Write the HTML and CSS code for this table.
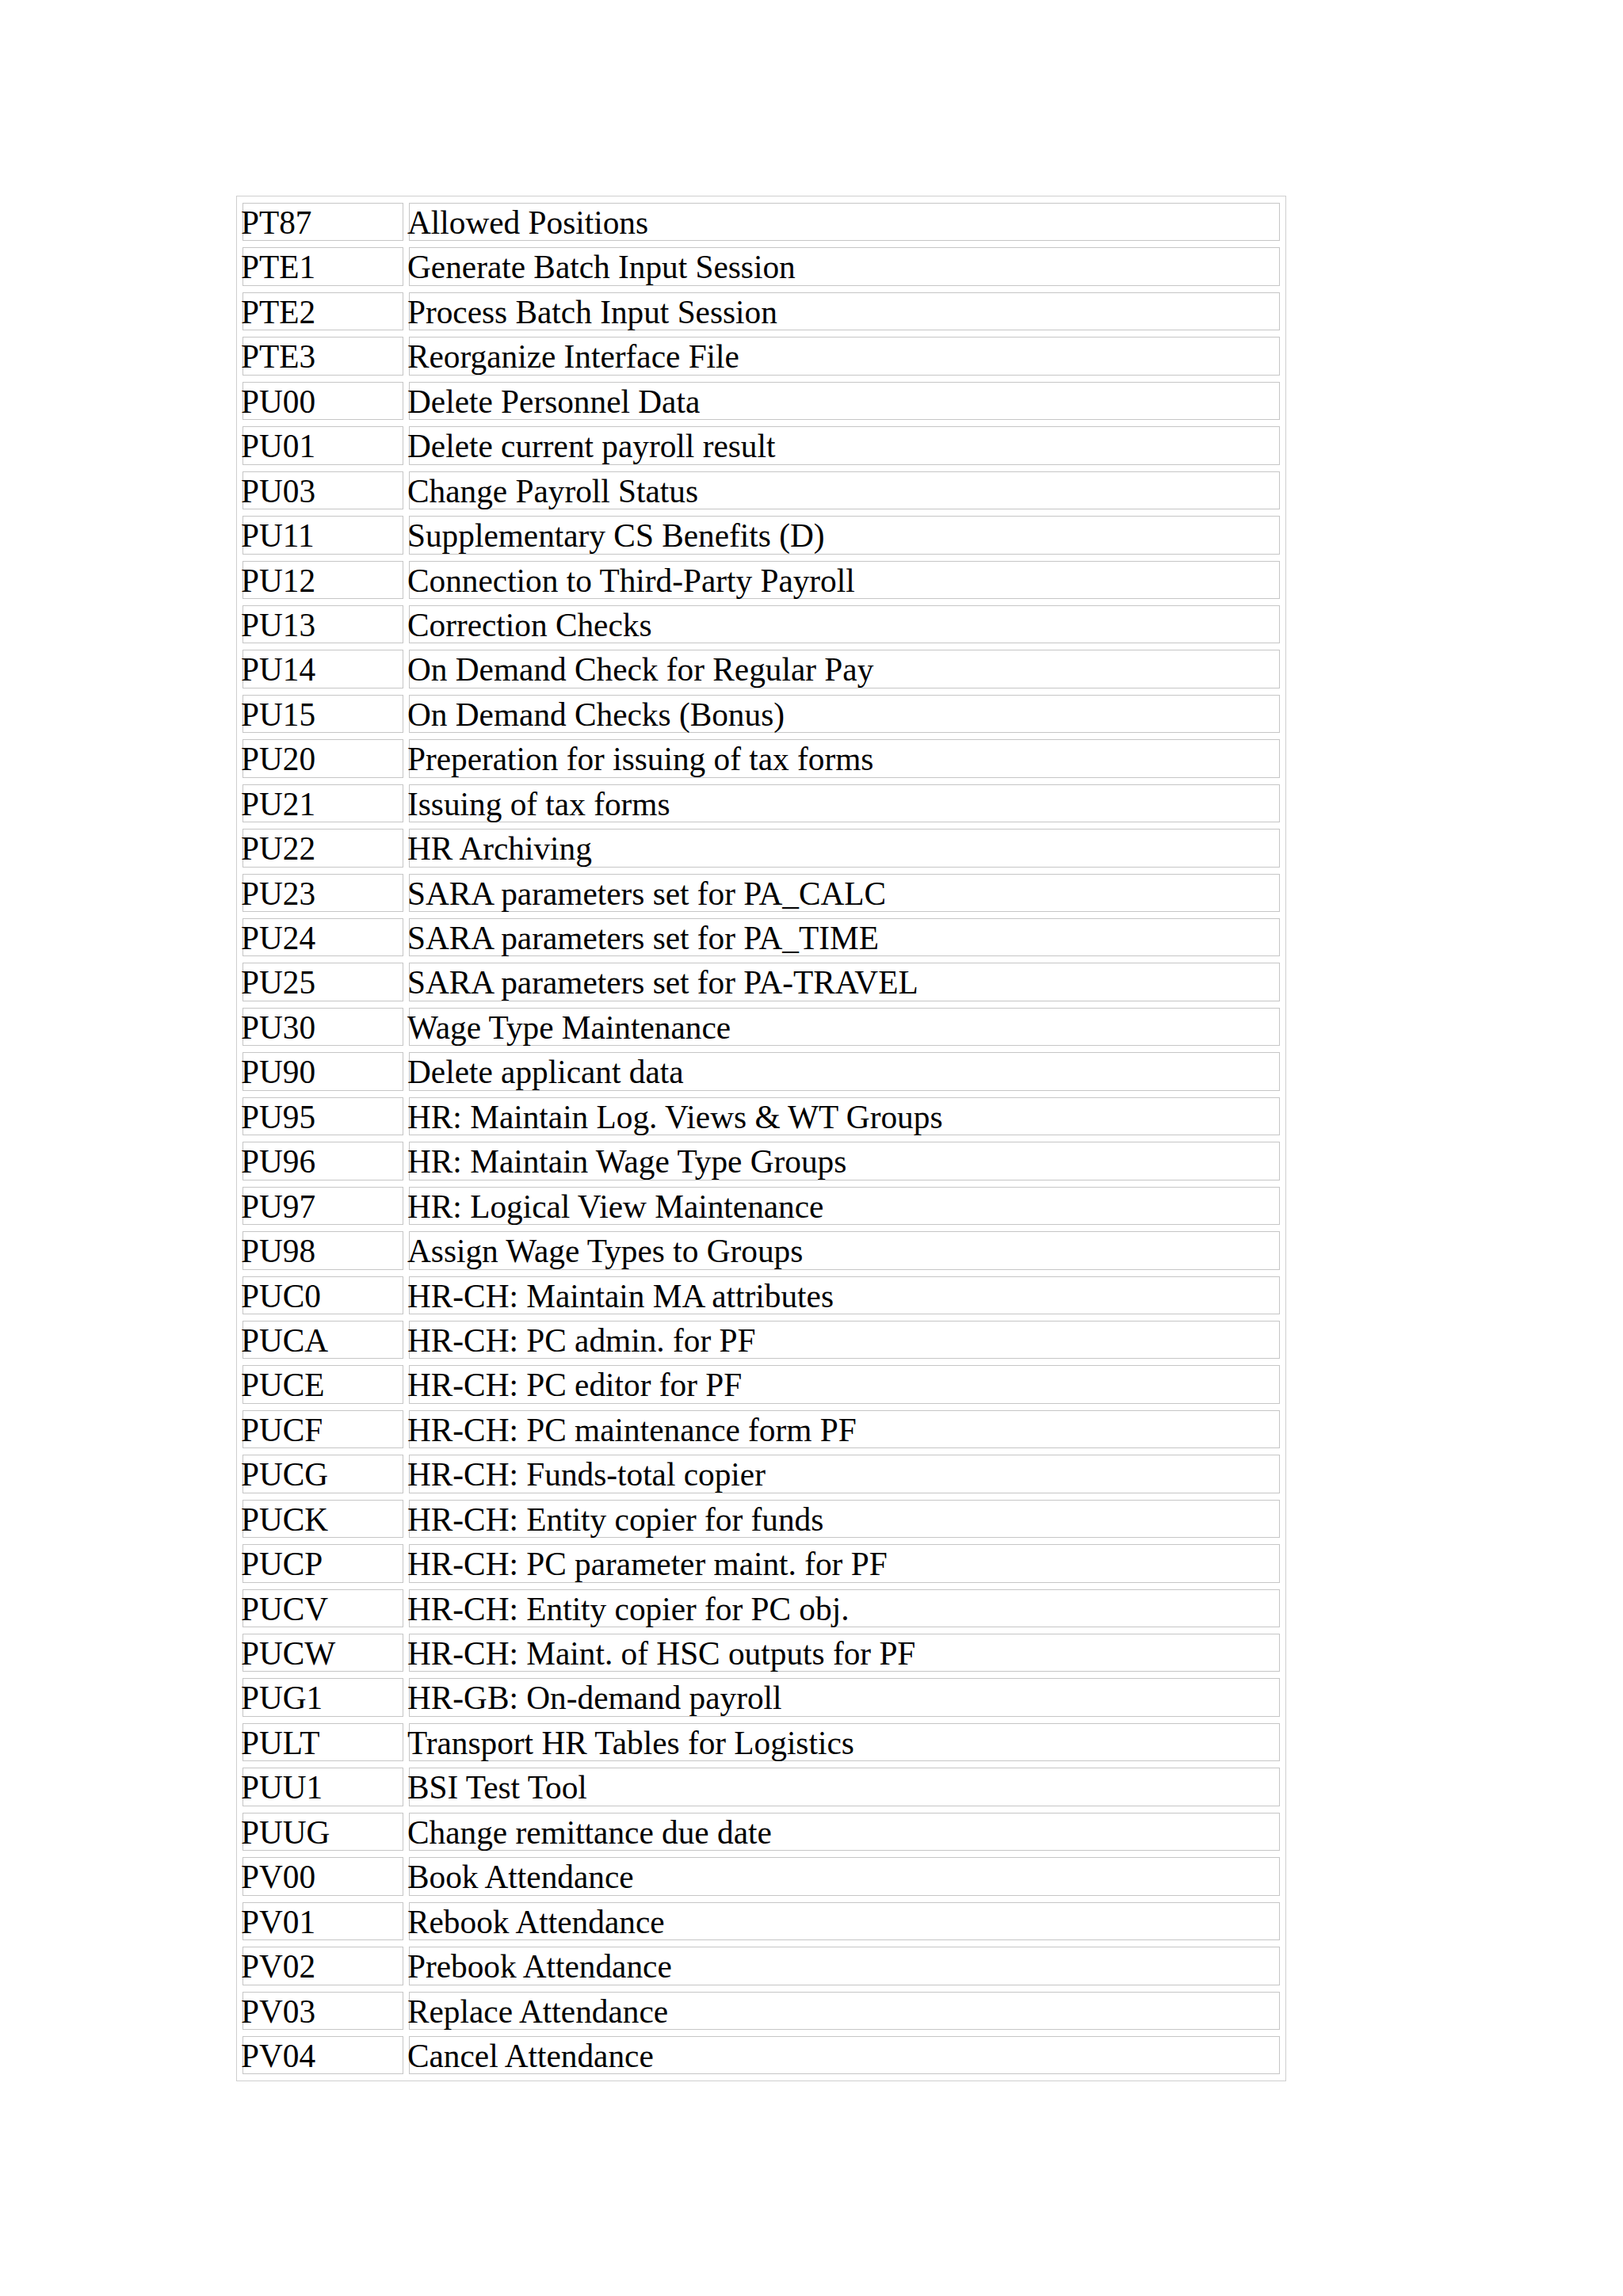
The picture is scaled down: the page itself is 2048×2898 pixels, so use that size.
FILE: index.html
```html
<!DOCTYPE html>
<html lang="en">
<head>
<meta charset="utf-8">
<title>Transaction codes</title>
<link rel="stylesheet" href="styles.css">
</head>
<body>
<div class="page">
<table class="codes">
<colgroup><col class="c-code"><col class="c-desc"></colgroup>
<tbody>
<tr><td>PT87</td><td>Allowed Positions</td></tr>
<tr><td>PTE1</td><td>Generate Batch Input Session</td></tr>
<tr><td>PTE2</td><td>Process Batch Input Session</td></tr>
<tr><td>PTE3</td><td>Reorganize Interface File</td></tr>
<tr><td>PU00</td><td>Delete Personnel Data</td></tr>
<tr><td>PU01</td><td>Delete current payroll result</td></tr>
<tr><td>PU03</td><td>Change Payroll Status</td></tr>
<tr><td>PU11</td><td>Supplementary CS Benefits (D)</td></tr>
<tr><td>PU12</td><td>Connection to Third-Party Payroll</td></tr>
<tr><td>PU13</td><td>Correction Checks</td></tr>
<tr><td>PU14</td><td>On Demand Check for Regular Pay</td></tr>
<tr><td>PU15</td><td>On Demand Checks (Bonus)</td></tr>
<tr><td>PU20</td><td>Preperation for issuing of tax forms</td></tr>
<tr><td>PU21</td><td>Issuing of tax forms</td></tr>
<tr><td>PU22</td><td>HR Archiving</td></tr>
<tr><td>PU23</td><td>SARA parameters set for PA_CALC</td></tr>
<tr><td>PU24</td><td>SARA parameters set for PA_TIME</td></tr>
<tr><td>PU25</td><td>SARA parameters set for PA-TRAVEL</td></tr>
<tr><td>PU30</td><td>Wage Type Maintenance</td></tr>
<tr><td>PU90</td><td>Delete applicant data</td></tr>
<tr><td>PU95</td><td>HR: Maintain Log. Views &amp; WT Groups</td></tr>
<tr><td>PU96</td><td>HR: Maintain Wage Type Groups</td></tr>
<tr><td>PU97</td><td>HR: Logical View Maintenance</td></tr>
<tr><td>PU98</td><td>Assign Wage Types to Groups</td></tr>
<tr><td>PUC0</td><td>HR-CH: Maintain MA attributes</td></tr>
<tr><td>PUCA</td><td>HR-CH: PC admin. for PF</td></tr>
<tr><td>PUCE</td><td>HR-CH: PC editor for PF</td></tr>
<tr><td>PUCF</td><td>HR-CH: PC maintenance form PF</td></tr>
<tr><td>PUCG</td><td>HR-CH: Funds-total copier</td></tr>
<tr><td>PUCK</td><td>HR-CH: Entity copier for funds</td></tr>
<tr><td>PUCP</td><td>HR-CH: PC parameter maint. for PF</td></tr>
<tr><td>PUCV</td><td>HR-CH: Entity copier for PC obj.</td></tr>
<tr><td>PUCW</td><td>HR-CH: Maint. of HSC outputs for PF</td></tr>
<tr><td>PUG1</td><td>HR-GB: On-demand payroll</td></tr>
<tr><td>PULT</td><td>Transport HR Tables for Logistics</td></tr>
<tr><td>PUU1</td><td>BSI Test Tool</td></tr>
<tr><td>PUUG</td><td>Change remittance due date</td></tr>
<tr><td>PV00</td><td>Book Attendance</td></tr>
<tr><td>PV01</td><td>Rebook Attendance</td></tr>
<tr><td>PV02</td><td>Prebook Attendance</td></tr>
<tr><td>PV03</td><td>Replace Attendance</td></tr>
<tr><td>PV04</td><td>Cancel Attendance</td></tr>
</tbody>
</table>
</div>
</body>
</html>
```

FILE: styles.css
```css
html, body {
  margin: 0;
  padding: 0;
  background: #ffffff;
}

.page {
  padding: 247px 0 0 298px;
  font-family: "Liberation Serif", "Times New Roman", serif;
  color: #000000;
}

.codes {
  border: 1px solid #cfcfcf;
  border-collapse: separate;
  border-spacing: 7px 8px;
  table-layout: fixed;
  width: 1325px;
  font-size: 41.3px;
}

.c-code {
  width: 203px;
}

.c-desc {
  width: 1099px;
}

.codes td {
  border: 1px solid #c6c6c6;
  height: 48.45px;
  box-sizing: border-box;
  padding: 2px 0 0 0;
  line-height: 44px;
  vertical-align: top;
  text-indent: -3px;
  white-space: nowrap;
}
```
